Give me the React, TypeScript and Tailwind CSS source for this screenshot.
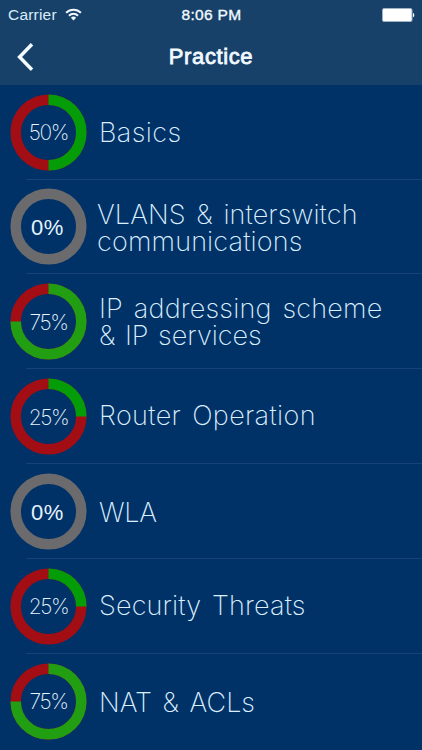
type Topic = {
  lines: { text: string; style: string }[];
  percent: number;
  good: string;
  labelStyle: string;
};

const LIGHT_GREEN = "#229e12";
const GREEN = "#049c07";

const topics: Topic[] = [
  { percent: 50, good: GREEN, labelStyle: "pl-[12px] pt-[1px]", lines: [{ text: "Basics", style: "tracking-[0.4px]" }] },
  {
    percent: 0,
    good: GREEN,
    labelStyle: "pl-[10px] pt-[2px]",
    lines: [
      { text: "VLANS & interswitch", style: "tracking-[0.1px] [word-spacing:3px]" },
      { text: "communications", style: "tracking-[0.15px]" },
    ],
  },
  {
    percent: 75,
    good: LIGHT_GREEN,
    labelStyle: "pl-[12px] pt-[1px]",
    lines: [
      { text: "IP addressing scheme", style: "tracking-[0.2px] [word-spacing:3px]" },
      { text: "& IP services", style: "tracking-[0px] [word-spacing:2px]" },
    ],
  },
  { percent: 25, good: GREEN, labelStyle: "pl-[12px] pb-[3px]", lines: [{ text: "Router Operation", style: "tracking-[0.35px] [word-spacing:3px]" }] },
  { percent: 0, good: GREEN, labelStyle: "pl-[12px] pt-[2px]", lines: [{ text: "WLA", style: "tracking-[-0.3px]" }] },
  { percent: 25, good: GREEN, labelStyle: "pl-[12px] pb-[2px]", lines: [{ text: "Security Threats", style: "tracking-[0.15px] [word-spacing:3px]" }] },
  { percent: 75, good: LIGHT_GREEN, labelStyle: "pl-[12px] pt-[2px]", lines: [{ text: "NAT & ACLs", style: "tracking-[0px] [word-spacing:3px]" }] },
];

// ── Header ────────────────────────────────────────────────────────────────────

function StatusBar() {
  return (
    <div className="grid h-[29px] grid-cols-3 items-center pl-[8px] pr-[7px]">
      <div className="flex items-center gap-[8px]">
        <span className="text-[15.5px] leading-none tracking-[0.2px] text-[#d9edf9]">Carrier</span>
        <svg width="17" height="13" viewBox="0 0 17 13" fill="none" stroke="#f1f9ff" strokeWidth="2">
          <path d="M1.1 4.8a10.4 10.4 0 0 1 14.8 0" />
          <path d="M4 7.7a6.4 6.4 0 0 1 9 0" />
          <path d="M8.5 12.5 5.9 9.7a3.7 3.7 0 0 1 5.2 0Z" fill="#f1f9ff" stroke="none" />
        </svg>
      </div>
      <span className="whitespace-nowrap text-center text-[15.5px] font-medium leading-none tracking-[0.3px] text-[#f1f9ff] [-webkit-text-stroke:0.35px]">
        8:06 PM
      </span>
      <svg className="justify-self-end" width="33" height="14" viewBox="0 0 33 14">
        <rect x="0.5" y="0.5" width="29.5" height="13" rx="1.5" fill="white" stroke="#9db4c8" />
        <path d="M31 4.7c1.8.8 1.8 3.8 0 4.6Z" fill="white" />
      </svg>
    </div>
  );
}

function NavBar() {
  return (
    <div className="grid flex-1 grid-cols-3 items-center px-[17px]">
      <button aria-label="Back" className="w-fit">
        <svg width="18" height="28" viewBox="0 0 18 28" fill="none" stroke="#f4fbff" strokeWidth="3.5">
          <path d="M15 1.3 2.6 14 15 26.7" />
        </svg>
      </button>
      <h1 className="text-center text-[22px] font-normal leading-none tracking-[0.6px] text-[#f1f9ff] [-webkit-text-stroke:0.8px]">
        Practice
      </h1>
    </div>
  );
}

// ── Topic rows ────────────────────────────────────────────────────────────────

function Ring({ percent, good }: { percent: number; good: string }) {
  const empty = percent === 0;
  return (
    <div className="grid shrink-0 place-items-center">
      <svg className="col-start-1 row-start-1 -rotate-90" width="77" height="77" viewBox="0 0 77 77" fill="none" strokeWidth="10.5">
        <circle cx="38.5" cy="38.5" r="32.8" stroke={empty ? "#6b6b6d" : "#a20e14"} />
        {!empty && (
          <circle cx="38.5" cy="38.5" r="32.8" stroke={good} pathLength="100" strokeDasharray={`${percent} 100`} />
        )}
      </svg>
      <span
        className={`col-start-1 row-start-1 leading-none text-[#e6f4ff] ${
          empty
            ? "pr-[2px] pt-[2px] text-[22px] tracking-[0.5px]"
            : "font-['Inter'] pt-[1px] text-[21px] font-extralight tracking-[-1.4px]"
        }`}
      >
        {percent}%
      </span>
    </div>
  );
}

function TopicRow({ topic, last }: { topic: Topic; last: boolean }) {
  return (
    <li className="h-[94.9px] shrink-0">
      <div className="flex h-[95px] items-center pl-[10px]">
        <Ring percent={topic.percent} good={topic.good} />
        <div className={`font-['Inter'] text-[27px] font-extralight leading-[27px] text-[#dcefff] ${topic.labelStyle}`}>
          {topic.lines.map((line) => (
            <div key={line.text} className={`w-fit whitespace-nowrap ${line.style}`}>
              {line.text}
            </div>
          ))}
        </div>
      </div>
      {!last && <div className="-mt-px ml-[26px] h-px bg-[#17437a]" />}
    </li>
  );
}

// ── Page ──────────────────────────────────────────────────────────────────────

export default function App() {
  return (
    <div className="flex h-[750px] w-[422px] flex-col overflow-hidden bg-[#003267] font-['Liberation_Sans',sans-serif]">
      <header className="flex h-[84.5px] shrink-0 flex-col bg-[#18416a]">
        <StatusBar />
        <NavBar />
      </header>
      <ul>
        {topics.map((topic, i) => (
          <TopicRow key={i} topic={topic} last={i === topics.length - 1} />
        ))}
      </ul>
    </div>
  );
}
